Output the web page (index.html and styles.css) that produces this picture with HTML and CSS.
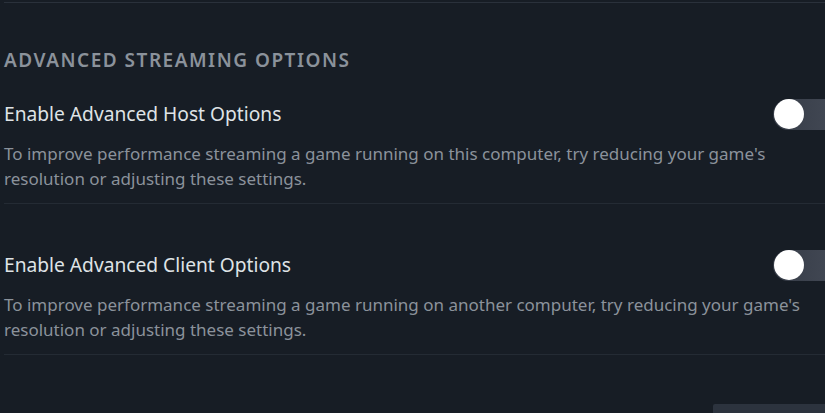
FILE: index.html
```html
<!DOCTYPE html>
<html lang="en">
<head>
    <meta charset="UTF-8">
    <meta name="viewport" content="width=device-width, initial-scale=1.0">
    <title>Remote Play</title>
    <link rel="stylesheet" href="styles.css">
</head>
<body>

    <div class="page">
        <div class="divider top"></div>

        <h2 class="section-title">Advanced Streaming Options</h2>

        <div class="setting">
            <div class="setting-row">
                <span class="setting-label">Enable Advanced Host Options</span>
                <span class="toggle"><span class="knob"></span></span>
            </div>
            <p class="setting-desc">To improve performance streaming a game running on this computer, try reducing your game's resolution or adjusting these settings.</p>
        </div>
        <div class="divider"></div>

        <div class="setting">
            <div class="setting-row">
                <span class="setting-label">Enable Advanced Client Options</span>
                <span class="toggle"><span class="knob"></span></span>
            </div>
            <p class="setting-desc">To improve performance streaming a game running on another computer, try reducing your game's resolution or adjusting these settings.</p>
        </div>
        <div class="divider"></div>

        <div class="footer">
            <button class="footer-btn"></button>
        </div>
    </div>

</body>
</html>
```

FILE: styles.css
```css
body {
    margin: 0;
    background: #171d25;
    font-family: "Noto Sans", "Open Sans", sans-serif;
    overflow: hidden;
}
.page {
    width: 845px;
    padding: 2px 0 0 4px;
}
.divider {
    height: 1px;
    background: #242b34;
    margin-right: 20px;
}
.divider.top {
    background: #2a313b;
}
.section-title {
    margin: 43px 0 0;
    font-size: 19px;
    font-weight: 600;
    letter-spacing: 1.5px;
    text-transform: uppercase;
    color: #8b929b;
    line-height: 28px;
}
.setting {
    padding-top: 23px;
}
.setting + .divider + .setting {
    padding-top: 44px;
}
.setting-row {
    display: flex;
    align-items: center;
    justify-content: space-between;
    height: 32px;
}
.setting-label {
    font-size: 19.2px;
    color: #dfe3e6;
}
.toggle {
    width: 76px;
    height: 31px;
    margin-top: 2px;
    border-radius: 16px;
    background: linear-gradient(90deg, #363c47, #454b57);
    display: flex;
    align-items: center;
    padding-left: 1px;
    box-sizing: border-box;
}
.knob {
    width: 30px;
    height: 30px;
    border-radius: 50%;
    background: #fff;
}
.setting-desc {
    margin: 12px 0 12px;
    font-size: 17px;
    line-height: 25px;
    color: #8b929b;
    width: 825px;
}
.footer {
    display: flex;
    justify-content: flex-end;
    padding-top: 49px;
    margin-right: 20px;
}
.footer-btn {
    width: 116px;
    height: 36px;
    border: none;
    border-radius: 2px;
    background: #2c333e;
}
```
